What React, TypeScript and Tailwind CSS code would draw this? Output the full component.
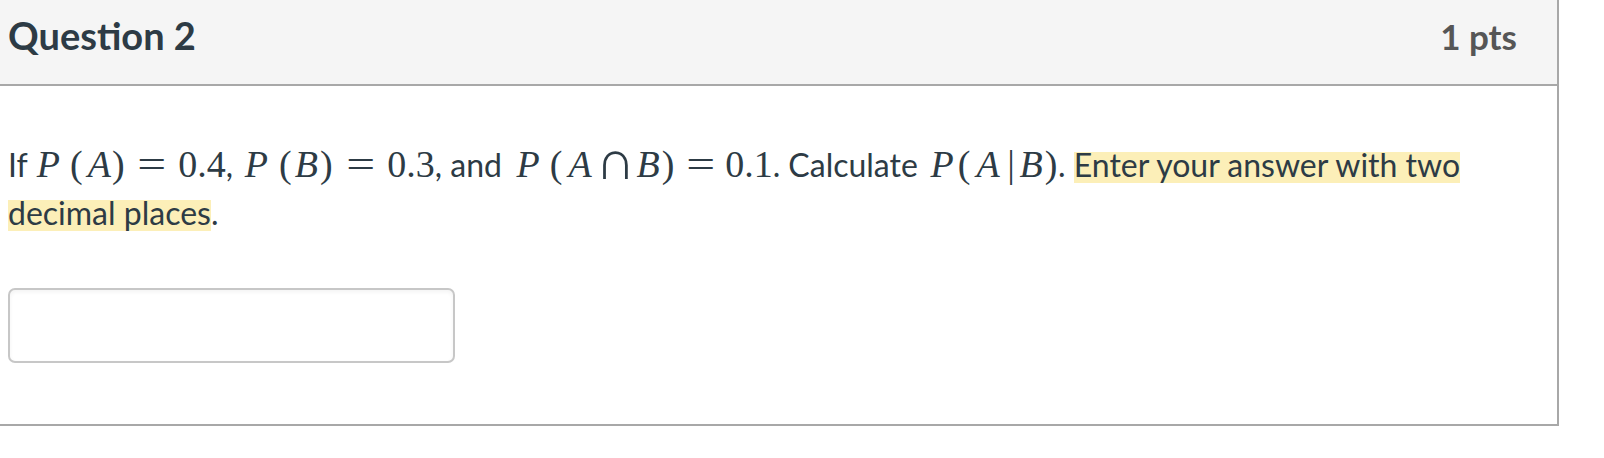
import clsx from 'clsx';
import type { ReactNode } from 'react';

type GlyphProps = { children?: ReactNode; className?: string };

// math is set in fixed slots so the spacing follows the original render
function Math({ children }: GlyphProps) {
  return (
    <span className="font-['Liberation_Serif',serif] text-[38px] leading-none">
      {children}
    </span>
  );
}

function V({ children, className }: GlyphProps) {
  return (
    <span className={clsx('inline-block w-[24px] text-center italic', className)}>
      {children}
    </span>
  );
}

function Paren({ children, className }: GlyphProps) {
  return <span className={clsx('inline-block w-[14px] text-center', className)}>{children}</span>;
}

function Eq({ className }: GlyphProps) {
  return (
    <span className={clsx('inline-block w-[30px] text-center', className)}>
      <span className="inline-block scale-x-[1.35]">=</span>
    </span>
  );
}

function Highlight({ children }: GlyphProps) {
  return (
    <span className="inline-block bg-[#fcefb8] pb-[6px] leading-[25px]">{children}</span>
  );
}

export default function App() {
  return (
    <div className="w-[1559px] border-r-2 border-b-2 border-[#a8a8a8] bg-white font-[Lato,sans-serif] text-[#2d3b45]">
      {/* Header */}
      <div className="flex h-[86px] items-baseline justify-between border-b-2 border-[#a8a8a8] bg-[#f5f5f5] pt-[16px] pr-10 pl-2">
        <span className="text-[38px] leading-none font-bold">Question 2</span>
        <span className="text-[35px] leading-none font-bold text-[#565656]">1 pts</span>
      </div>

      {/* Body */}
      <div className="pt-[55px] pr-2 pb-[61px] pl-2">
        <p className="text-[32px] leading-[48px]">
          If{' '}
          <Math>
            <V className="ml-[1px]">P</V>
            <Paren className="ml-[9px]">(</Paren>
            <V className="ml-[4px]">A</V>
            <Paren>)</Paren>
            <Eq className="ml-[11px]" />
            <span className="ml-[12px]">0.4</span>
          </Math>
          ,{' '}
          <Math>
            <V className="ml-[3px]">P</V>
            <Paren className="ml-[10px]">(</Paren>
            <V className="ml-[2px]">B</V>
            <Paren className="ml-[1px]">)</Paren>
            <Eq className="ml-[12px]" />
            <span className="ml-[12px]">0.3</span>
          </Math>
          , and{' '}
          <Math>
            <V className="ml-[6px]">P</V>
            <Paren className="ml-[9px]">(</Paren>
            <V className="ml-[5px]">A</V>
            <span className="ml-[8px] inline-block w-[32px] text-center">
              <span className="inline-block origin-[50%_75%] scale-[1.45]">∩</span>
            </span>
            <V className="ml-[4px]">B</V>
            <Paren className="ml-[1px]">)</Paren>
            <Eq className="ml-[11px]" />
            <span className="ml-[9px]">0.1</span>
          </Math>
          . Calculate{' '}
          <Math>
            <V className="ml-[4px]">P</V>
            <Paren className="ml-[3px]">(</Paren>
            <V className="ml-[5px]">A</V>
            <span className="ml-[7px] inline-block w-[8px] text-center">|</span>
            <V className="ml-[4px]">B</V>
            <Paren className="ml-[1px]">)</Paren>
          </Math>
          . <Highlight>Enter your answer with two</Highlight> <Highlight>decimal places</Highlight>.
        </p>

        <input
          type="text"
          className="mt-[51px] block h-[75px] w-[447px] rounded-[7px] border-2 border-[#c7c7c7] bg-white shadow-inner outline-none"
        />
      </div>
    </div>
  );
}
